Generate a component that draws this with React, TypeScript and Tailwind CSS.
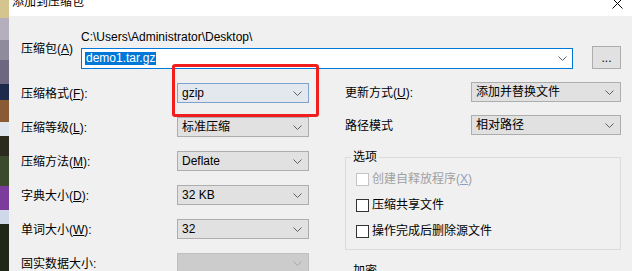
import React from "react";

const Chevron = ({ color = "#606060" }: { color?: string }) => (
  <svg width="9" height="5" viewBox="0 0 9 5" className="shrink-0">
    <path d="M0.5 0.5 L4.5 4.5 L8.5 0.5" fill="none" stroke={color} strokeWidth="1" />
  </svg>
);

type Variant = "normal" | "focus" | "disabled";

const Combo = ({ text, variant = "normal", w }: { text?: string; variant?: Variant; w: string }) => {
  const cls =
    variant === "focus"
      ? "bg-[#e3e8ee] border-[#7da2ce]"
      : variant === "disabled"
      ? "bg-[#cccccc] border-[#bfbfbf]"
      : "bg-[#e1e1e1] border-[#adadad]";
  return (
    <div className={`${w} h-[20px] border ${cls} flex items-center justify-between pl-[4px] pr-[6px]`}>
      <span className="text-[12px] leading-[16px] text-black whitespace-nowrap">{text}</span>
      <Chevron color={variant === "disabled" ? "#a8a8a8" : "#606060"} />
    </div>
  );
};

const Lbl = ({ t, k, colon = true }: { t: string; k?: string; colon?: boolean }) => (
  <span className="text-[12px] leading-[16px] text-black whitespace-nowrap">
    {t}
    {k ? (
      <>
        (<span className="underline underline-offset-1">{k}</span>)
      </>
    ) : null}
    {colon ? ":" : ""}
  </span>
);

const Row = ({ label, combo }: { label: React.ReactNode; combo: React.ReactNode }) => (
  <div className="flex items-center h-[20px]">
    <div className="w-[156px]">{label}</div>
    {combo}
  </div>
);

const RRow = ({ label, combo }: { label: React.ReactNode; combo: React.ReactNode }) => (
  <div className="flex items-center h-[20px]">
    <div className="w-[126px]">{label}</div>
    {combo}
  </div>
);

const Check = ({ text, disabled = false }: { text: React.ReactNode; disabled?: boolean }) => (
  <div className="flex items-center h-[16px] gap-[3px]">
    <div
      className={`w-[13px] h-[13px] border bg-white ${disabled ? "border-[#c4c4c4]" : "border-[#333333]"}`}
    />
    <span className={`text-[12px] leading-[16px] whitespace-nowrap ${disabled ? "text-[#a0a0a0]" : "text-black"}`}>
      {text}
    </span>
  </div>
);

export default function App() {
  return (
    <div className="w-[632px] h-[271px] overflow-hidden flex font-['Liberation_Sans','Noto_Sans_CJK_SC',sans-serif]">
      {/* desktop strip */}
      <div className="w-[9px] flex flex-col shrink-0">
        <div className="h-[18px] bg-[#d4c48e]" />
        <div className="h-[22px] bg-[#b4aebd]" />
        <div className="h-[20px] bg-[#8f8a9c]" />
        <div className="h-[24px] bg-[#6d6880]" />
        <div className="h-[16px] bg-[#1d2a4c]" />
        <div className="h-[22px] bg-[#8a5a34]" />
        <div className="h-[14px] bg-[#dfe6f0]" />
        <div className="h-[20px] bg-[#2b2a1e]" />
        <div className="h-[30px] bg-[#3b4a2c]" />
        <div className="h-[24px] bg-[#7b3c9c]" />
        <div className="h-[14px] bg-[#cfd8e8]" />
        <div className="flex-1 bg-[#1f2818]" />
      </div>

      {/* dialog */}
      <div className="flex-1 flex flex-col">
        <div className="h-[16px] bg-white flex justify-between overflow-hidden shrink-0">
          <span className="ml-[3px] -mt-[6px] text-[12px] leading-[16px] text-black whitespace-nowrap">
            添加到压缩包
          </span>
          <svg width="11" height="11" viewBox="0 0 11 11" className="mr-[9px] -mt-[2px]">
            <path d="M0.5 0.5 L10.5 10.5 M10.5 0.5 L0.5 10.5" stroke="#000" strokeWidth="1" />
          </svg>
        </div>

        <div className="flex-1 bg-[#f0f0f0] relative pl-[12px] pt-[13px]">
          {/* archive row */}
          <div className="flex">
            <div className="w-[60px] pt-[7px]">
              <Lbl t="压缩包" k="A" colon={false} />
            </div>
            <div className="flex flex-col">
              <div className="text-[12px] leading-[16px] text-black h-[16px]">C:\Users\Administrator\Desktop\</div>
              <div className="flex items-end gap-[19px] mt-[1px]">
                <div className="w-[492px] h-[21px] border border-[#0078d7] bg-white flex items-center justify-between pl-[3px] pr-[5px]">
                  <span className="bg-[#0078d7] text-white text-[12px] leading-[13px] h-[13px] px-[1px]">demo1.tar.gz</span>
                  <Chevron />
                </div>
                <div className="w-[29px] h-[23px] border border-[#adadad] bg-[#e1e1e1] flex items-center justify-center">
                  <span className="text-[12px] leading-[12px] text-black">...</span>
                </div>
              </div>
            </div>
          </div>

          {/* main section */}
          <div className="flex mt-[14px]">
            <div className="w-[288px] flex flex-col gap-[14px]">
              <Row label={<Lbl t="压缩格式" k="F" />} combo={<Combo text="gzip" variant="focus" w="w-[132px]" />} />
              <Row label={<Lbl t="压缩等级" k="L" />} combo={<Combo text="标准压缩" w="w-[132px]" />} />
              <Row label={<Lbl t="压缩方法" k="M" />} combo={<Combo text="Deflate" w="w-[132px]" />} />
              <Row label={<Lbl t="字典大小" k="D" />} combo={<Combo text="32 KB" w="w-[132px]" />} />
              <Row label={<Lbl t="单词大小" k="W" />} combo={<Combo text="32" w="w-[132px]" />} />
              <Row label={<Lbl t="固实数据大小" />} combo={<Combo variant="disabled" w="w-[132px]" />} />
            </div>

            <div className="ml-[36px] flex flex-col -mt-[1px]">
              <div className="flex flex-col gap-[13px]">
                <RRow label={<Lbl t="更新方式" k="U" />} combo={<Combo text="添加并替换文件" w="w-[150px]" />} />
                <RRow label={<Lbl t="路径模式" colon={false} />} combo={<Combo text="相对路径" w="w-[150px]" />} />
              </div>

              <fieldset className="mt-[14px] w-[276px] border border-[#dcdcdc] pl-[10px] pb-[10px] pt-[6px] flex flex-col gap-[10px]">
                <legend className="-ml-[5px] px-[2px] text-[12px] leading-[16px] text-black">选项</legend>
                <Check
                  disabled
                  text={
                    <>
                      创建自释放程序(<span className="underline underline-offset-1 text-[#8aa0c8]">X</span>)
                    </>
                  }
                />
                <Check text="压缩共享文件" />
                <Check text="操作完成后删除源文件" />
              </fieldset>

              <fieldset className="mt-[13px] w-[276px] h-[40px] border border-[#dcdcdc]">
                <legend className="ml-[5px] px-[2px] text-[12px] leading-[16px] text-black">加密</legend>
              </fieldset>
            </div>
          </div>

          {/* red annotation */}
          <div className="absolute left-[163px] top-[48px] w-[147px] h-[53px] border-[3px] border-[#f21d1d] rounded-[3px]" />
        </div>
      </div>
    </div>
  );
}
